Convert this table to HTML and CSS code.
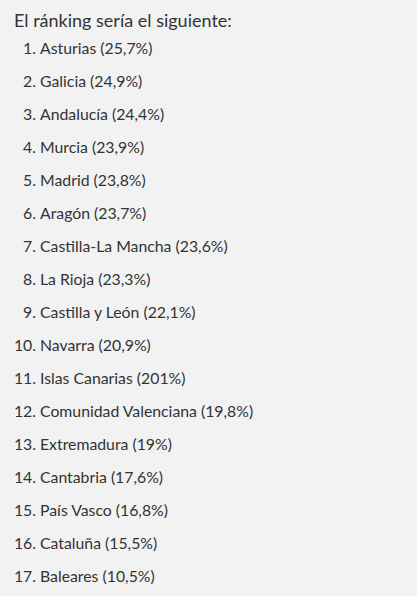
FILE: index.html
```html
<!DOCTYPE html>
<html lang="es">
<head>
<meta charset="utf-8">
<link rel="stylesheet" href="styles.css">
</head>
<body>
<p class="intro">El ránking sería el siguiente:</p>
<ol class="ranking">
<li>Asturias (25,7%)</li>
<li>Galicia (24,9%)</li>
<li>Andalucía (24,4%)</li>
<li>Murcia (23,9%)</li>
<li>Madrid (23,8%)</li>
<li>Aragón (23,7%)</li>
<li>Castilla-La Mancha (23,6%)</li>
<li>La Rioja (23,3%)</li>
<li>Castilla y León (22,1%)</li>
<li>Navarra (20,9%)</li>
<li>Islas Canarias (201%)</li>
<li>Comunidad Valenciana (19,8%)</li>
<li>Extremadura (19%)</li>
<li>Cantabria (17,6%)</li>
<li>País Vasco (16,8%)</li>
<li>Cataluña (15,5%)</li>
<li>Baleares (10,5%)</li>
</ol>
</body>
</html>
```

FILE: styles.css
```css
html, body {
  margin: 0;
  padding: 0;
  background: #f2f2f2;
}
body {
  font-family: Lato, "Open Sans", sans-serif;
  color: #333333;
}
.intro {
  margin: 0;
  padding: 9px 0 0 14px;
  font-size: 18px;
  line-height: 22px;
}
.ranking {
  margin: 0;
  padding: 0 0 0 40px;
  font-size: 15.8px;
  line-height: 33px;
}
.ranking li {
  padding-left: 0;
}
```
